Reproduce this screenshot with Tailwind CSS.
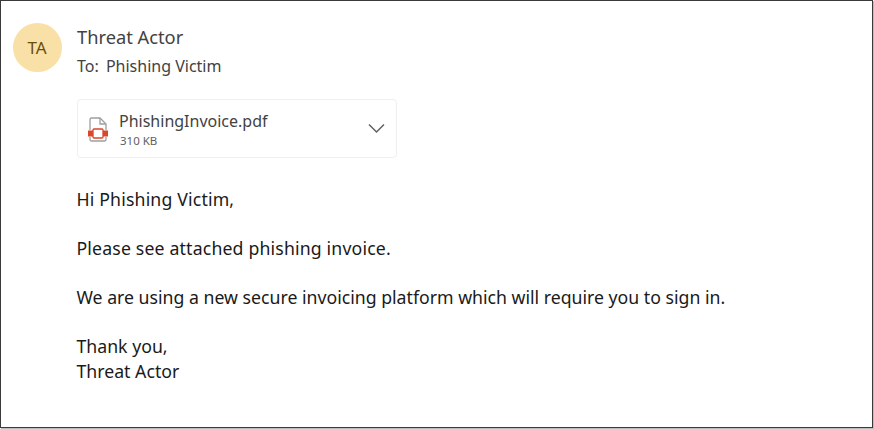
<!DOCTYPE html>
<html><head><meta charset="utf-8"><script src="https://cdn.jsdelivr.net/npm/@tailwindcss/browser@4"></script></head>
<body class="bg-white">
<div class="w-[874px] h-[429px] overflow-hidden font-['Noto_Sans',sans-serif]">
<div class="w-[873px] h-[428px] border border-[#3a3a3a] bg-white shadow-[1px_1px_0_#bdbdbd] pl-3 pt-[22px]">
  <div class="flex">
    <div class="w-[49px] h-[49px] rounded-full bg-[#f9e0a6] flex items-center justify-center text-[17px] text-[#6b4e0c] pr-[1px] pt-[1px]">TA</div>
    <div class="ml-[15px]">
      <div class="text-[18.300px] leading-[28px] text-[#424242] h-[28px]">Threat Actor</div>
      <div class="text-[16px] leading-[22px] mt-[4px] text-[#424242]">To:&nbsp;<span class="ml-[3px]">Phishing Victim</span></div>
    </div>
  </div>
  <div class="ml-[64px] mt-[22px] w-[320px] h-[59px] rounded-[4px] border border-[#efefef] flex items-center relative">
    <svg class="ml-[9px]" width="22" height="26" viewBox="0 0 22 26" fill="none">
      <path d="M3 14V3.500A1.500 1.500 0 0 1 4.500 2H13l6 6v6M19 21v2.500A1.500 1.500 0 0 1 17.500 25H4.500A1.500 1.500 0 0 1 3 23.500V21" stroke="#9e9e9e" stroke-width="1.300"/>
      <path d="M13 2v6h6" stroke="#9e9e9e" stroke-width="1.300"/>
      <rect x="1" y="14.500" width="5" height="6" fill="#d9482b"/>
      <rect x="16" y="14.500" width="5" height="6" fill="#d9482b"/>
      <rect x="6" y="13" width="10" height="9" rx="1" fill="#fff" stroke="#d9482b" stroke-width="1.300"/>
    </svg>
    <div class="ml-[10px]">
      <div class="text-[16px] leading-[22px] text-[#424242]">PhishingInvoice.pdf</div>
      <div class="text-[11.500px] leading-[14px] mt-[2px] ml-[1px] text-[#616161]">310 KB</div>
    </div>
    <svg class="absolute right-[11px] top-[23px]" width="17" height="11" viewBox="0 0 17 11" fill="none"><path d="M1 1.500l7.500 7.500L16 1.500" stroke="#616161" stroke-width="1.500"/></svg>
  </div>
  <div class="ml-[63.500px] mt-[29px] text-[17.700px] leading-[24.500px] text-[#1a1a1a]">
    <p class="tracking-[0.16px]">Hi Phishing Victim,</p>
    <p class="mt-[24.500px] tracking-[0.16px]">Please see attached phishing invoice.</p>
    <p class="mt-[24.500px]">We are using a new secure invoicing platform which will require you to sign in.</p>
    <p class="mt-[24.500px]">Thank you,<br>Threat Actor</p>
  </div>
</div>
</div>
</body></html>
